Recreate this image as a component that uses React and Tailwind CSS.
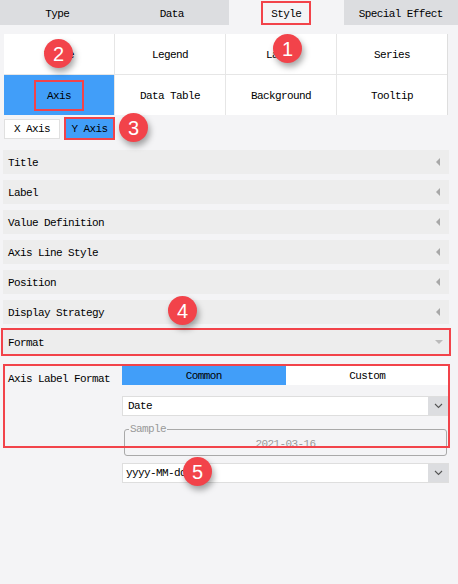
import React from 'react';

const Marker = ({ n, className }) => (
    <span
        className={`absolute z-10 flex h-[29px] w-[29px] items-center justify-center rounded-full bg-[#f2434a] font-['Liberation_Sans',Arial,sans-serif] text-[20px] leading-none tracking-normal text-white shadow-[2px_4px_6px_rgba(0,0,0,0.35)] ${className}`}
    >
        {n}
    </span>
);

const Chevron = () => (
    <span className="flex h-full w-[20px] items-center justify-center bg-[#dcdde0]">
        <svg width="9" height="6" viewBox="0 0 9 6" fill="none">
            <polyline points="1,1 4.5,4.5 8,1" stroke="#555" strokeWidth="1.1" />
        </svg>
    </span>
);

const sections = ['Title', 'Label', 'Value Definition', 'Axis Line Style', 'Position', 'Display Strategy'];

const App = () => {
    return (
        <div className="relative h-[584px] w-[458px] overflow-hidden bg-[#f4f4f6] font-['Liberation_Mono',monospace] text-[11px] tracking-[-0.6px] text-black">
            {/* Top tabs */}
            <div className="grid h-6 grid-cols-4">
                <div className="flex items-center justify-center bg-[#dcdde0] pt-[3px]">Type</div>
                <div className="flex items-center justify-center bg-[#dcdde0] pt-[3px]">Data</div>
                <div className="flex items-start justify-center pt-px">
                    <span className="flex h-[24px] w-[50px] items-center justify-center border-2 border-[#f2434a] pt-[2px]">Style</span>
                </div>
                <div className="flex items-center justify-center bg-[#dcdde0] pt-[3px]">Special Effect</div>
            </div>

            {/* Style categories */}
            <div className="ml-1 mr-[10px] mt-[10px] grid grid-cols-4 gap-px border-r border-[#dedede] bg-[#e6e6e6]">
                <div className="flex h-10 items-center justify-center bg-white pt-[3px]">Title</div>
                <div className="flex h-10 items-center justify-center bg-white pt-[3px]">Legend</div>
                <div className="flex h-10 items-center justify-center bg-white pt-[3px]">Label</div>
                <div className="flex h-10 items-center justify-center bg-white pt-[3px]">Series</div>
                <div className="flex h-10 items-center justify-center bg-[#419ef9]">
                    <span className="flex h-[31px] w-[50px] items-center justify-center border-2 border-[#f2434a] pt-[2px]">Axis</span>
                </div>
                <div className="flex h-10 items-center justify-center bg-white pt-[2px]">Data Table</div>
                <div className="flex h-10 items-center justify-center bg-white pt-[2px]">Background</div>
                <div className="flex h-10 items-center justify-center bg-white pt-[2px]">Tooltip</div>
            </div>

            {/* Axis switch */}
            <div className="mt-[2px] flex h-[23px] items-center pl-1">
                <div className="flex h-5 w-[56px] items-center justify-center border border-[#e0e0e0] bg-white pt-px">X Axis</div>
                <div className="ml-[4px] flex h-[23px] w-[51px] items-center justify-center border-2 border-[#f2434a] bg-[#419ef9] pt-px">Y Axis</div>
            </div>

            {/* Collapsible sections */}
            <div className="mx-[3px] mr-[9px] mt-[10px] flex flex-col gap-[6px]">
                {sections.map((s) => (
                    <div key={s} className="flex h-6 items-center justify-between bg-[#ededed] pl-[5px] pr-[9px]">
                        <span className="pt-[2px]">{s}</span>
                        <span className="h-0 w-0 border-y-[4px] border-r-[4px] border-y-transparent border-r-[#a8a8a8]" />
                    </div>
                ))}
                <div className="flex h-6 items-center justify-between bg-[#ededed] pl-[5px] pr-[6px] outline-2 outline-[#f2434a]">
                    <span className="pt-[2px]">Format</span>
                    <span className="h-0 w-0 border-x-[4px] border-t-[4px] border-x-transparent border-t-[#bbbbbb]" />
                </div>
            </div>

            {/* Axis label format */}
            <div className="mt-3 flex">
                <div className="w-[122px] pl-[8px] pt-[5px]">Axis Label Format</div>
                <div className="w-[327px]">
                    <div className="grid h-[19px] grid-cols-2 border-b border-[#dcdcdc]">
                        <div className="flex items-center justify-center bg-[#419ef9] pt-[2px]">Common</div>
                        <div className="flex items-center justify-center bg-white pt-[2px]">Custom</div>
                    </div>
                    <div className="mt-[11px] flex h-5 items-center justify-between border border-[#dedede] bg-white pl-[5px]">
                        <span className="pt-px">Date</span>
                        <Chevron />
                    </div>
                    <fieldset className="mx-[2px] mt-[8px] h-[32px] rounded-[3px] border border-[#a9a9a9] text-[#999]">
                        <legend className="ml-[4px] px-px leading-[11px]">Sample</legend>
                        <div className="pt-[2px] text-center leading-[14px]">2021-03-16</div>
                    </fieldset>
                    <div className="mt-[7px] flex h-5 items-center justify-between border border-[#dedede] bg-white pl-[3px]">
                        <span className="pt-px">yyyy-MM-dd</span>
                        <Chevron />
                    </div>
                </div>
            </div>

            {/* Annotation overlays */}
            <div className="pointer-events-none absolute left-[3px] top-[364px] h-[84px] w-[447px] border-2 border-[#f2434a]" />
            <Marker n="1" className="left-[273px] top-[34px]" />
            <Marker n="2" className="left-[44px] top-[39px]" />
            <Marker n="3" className="left-[119px] top-[113px]" />
            <Marker n="4" className="left-[168px] top-[296px]" />
            <Marker n="5" className="left-[183px] top-[457px]" />
        </div>
    );
};

export default App;
